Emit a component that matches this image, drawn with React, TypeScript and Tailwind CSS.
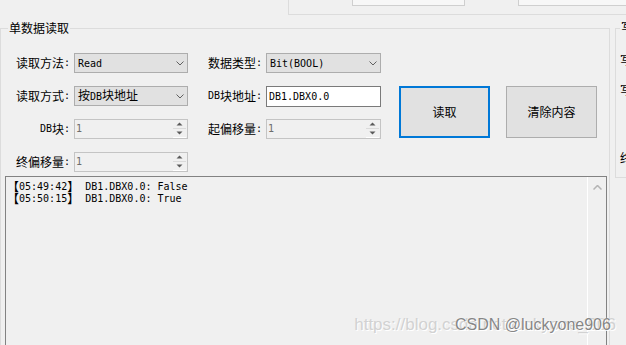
import React from 'react';

// ASCII runs are drawn narrow and monospaced, like the half-width glyphs of SimSun
function Mixed({ text }: { text: string }) {
    const parts = text.split(/([\x00-\x7f]+)/).filter(Boolean);
    return (
        <>
            {parts.map((p, i) =>
                /^[\x00-\x7f]+$/.test(p) ? (
                    <span key={i} className="font-['DejaVu_Sans_Mono',monospace] text-[10px] whitespace-pre">
                        {p}
                    </span>
                ) : (
                    <span key={i}>{p}</span>
                )
            )}
        </>
    );
}

function Label({ text }: { text: string }) {
    return (
        <div className="h-[20px] flex items-center justify-end pr-[4px] whitespace-nowrap">
            <Mixed text={text} />
        </div>
    );
}

function Chevron() {
    return (
        <svg width="8" height="5" viewBox="0 0 8 5" className="shrink-0">
            <polyline points="0.5,0.5 4,4 7.5,0.5" fill="none" stroke="#606060" strokeWidth="1" />
        </svg>
    );
}

function Select({ value }: { value: string }) {
    return (
        <div className="h-[20px] border border-[#adadad] bg-[#e1e1e1] flex items-center justify-between pl-[3px] pr-[3px]">
            <span className="whitespace-nowrap">
                <Mixed text={value} />
            </span>
            <Chevron />
        </div>
    );
}

function TextBox({ value }: { value: string }) {
    return (
        <div className="h-[21px] border border-[#7a7a7a] bg-white flex items-center pl-[2px]">
            <Mixed text={value} />
        </div>
    );
}

function Tri({ up }: { up?: boolean }) {
    return (
        <svg width="7" height="4" viewBox="0 0 7 4">
            <polygon points={up ? '0.5,3.5 3.5,0.5 6.5,3.5' : '0.5,0.5 3.5,3.5 6.5,0.5'} fill="#5a5a5a" />
        </svg>
    );
}

function SpinBox({ value }: { value: string }) {
    return (
        <div className="h-[20px] border border-[#c4c4c4] bg-[#f0f0f0] flex items-stretch">
            <div className="flex-1 flex items-center pl-[1px] text-[#6d6d6d]">
                <Mixed text={value} />
            </div>
            <div className="w-[13px] mr-[1px] flex flex-col">
                <div className="flex-1 flex items-center justify-center border-b border-[#dadada]">
                    <Tri up />
                </div>
                <div className="flex-1 flex items-center justify-center border-b border-white">
                    <Tri />
                </div>
            </div>
        </div>
    );
}

const logLines = ['【05:49:42】 DB1.DBX0.0: False', '【05:50:15】 DB1.DBX0.0: True'];

export default function App() {
    return (
        <div className="relative w-[626px] h-[345px] overflow-hidden bg-[#f0f0f0] text-black text-[12px] leading-[12px] font-['Noto_Sans_CJK_SC',sans-serif]">
            {/* previous group, cut off at the top */}
            <div className="flex h-[15px]">
                <div className="w-[288px] shrink-0" />
                <div className="flex-1 flex border-l border-b border-[#dcdcdc]">
                    <div className="ml-[63px] w-[113px] h-[6px] border-l border-r border-b border-[#cfcfcf] bg-[#f7f7f7]" />
                    <div className="ml-[53px] flex-1 h-[6px] border-l border-b border-[#cfcfcf] bg-[#f7f7f7]" />
                </div>
            </div>

            <div className="flex mt-[13px]">
                {/* 单数据读取 */}
                <div className="relative w-[610px] h-[330px] shrink-0 border border-[#dcdcdc]">
                    <span className="absolute left-[7px] -top-[7px] px-px bg-[#f0f0f0]">单数据读取</span>

                    <div className="pl-[7px] pt-[24px] grid grid-cols-[66px_114px_78px_115px_18px_91px_16px_91px] grid-rows-[33px_33px_33px_20px] items-start">
                        <Label text="读取方法:" />
                        <Select value="Read" />
                        <Label text="数据类型:" />
                        <Select value="Bit(BOOL)" />
                        <div className="col-span-4" />

                        <Label text="读取方式:" />
                        <Select value="按DB块地址" />
                        <Label text="DB块地址:" />
                        <TextBox value="DB1.DBX0.0" />
                        <div />
                        <button className="row-span-2 h-[52px] border-2 border-[#0078d7] bg-[#e1e1e1] flex items-center justify-center">
                            读取
                        </button>
                        <div />
                        <button className="row-span-2 h-[52px] border border-[#adadad] bg-[#e1e1e1] flex items-center justify-center">
                            清除内容
                        </button>

                        <Label text="DB块:" />
                        <SpinBox value="1" />
                        <Label text="起偏移量:" />
                        <SpinBox value="1" />
                        <div />
                        <div />

                        <Label text="终偏移量:" />
                        <SpinBox value="1" />
                    </div>

                    {/* log */}
                    <div className="mt-[4px] ml-[4px] w-[602px] h-[200px] border border-[#828282] flex">
                        <div className="flex-1 pl-[1px] pt-[4px]">
                            {logLines.map((l) => (
                                <div key={l} className="h-[12px] flex items-center whitespace-nowrap">
                                    <Mixed text={l} />
                                </div>
                            ))}
                        </div>
                        <div className="w-[19px] border-l border-white flex justify-center pt-[8px]">
                            <svg width="9" height="5" viewBox="0 0 9 5">
                                <polyline points="0.5,4.5 4.5,0.5 8.5,4.5" fill="none" stroke="#b4b4b4" strokeWidth="1.5" />
                            </svg>
                        </div>
                    </div>
                </div>

                {/* next group, cut off on the right */}
                <div className="relative ml-[5px] w-[120px] h-[150px] shrink-0 border-l border-t border-b border-[#dcdcdc] pl-[4px] flex flex-col">
                    <span className="absolute left-[4px] -top-[8px] px-px bg-[#f0f0f0] whitespace-nowrap">写入数据</span>
                    <span className="mt-[25px] whitespace-nowrap">写入方法:</span>
                    <span className="mt-[18px] whitespace-nowrap">写入方式:</span>
                    <span className="mt-[56px] whitespace-nowrap">终偏移量:</span>
                </div>
            </div>

            {/* watermark */}
            <div className="absolute right-[10px] top-[315px] text-[17px] leading-[20px] text-[#d2d2d2] font-['Liberation_Sans',sans-serif] whitespace-nowrap [text-shadow:1px_1px_0_#ffffff]">
                https://blog.csdn.net/luckyone_906
            </div>
            <div className="absolute left-[455px] top-[316px] text-[16px] leading-[18px] text-[#868686] font-['Liberation_Sans',sans-serif] whitespace-nowrap [text-shadow:0_0_1px_#ffffff,1px_1px_0_#ffffff]">
                CSDN @luckyone906
            </div>
        </div>
    );
}
